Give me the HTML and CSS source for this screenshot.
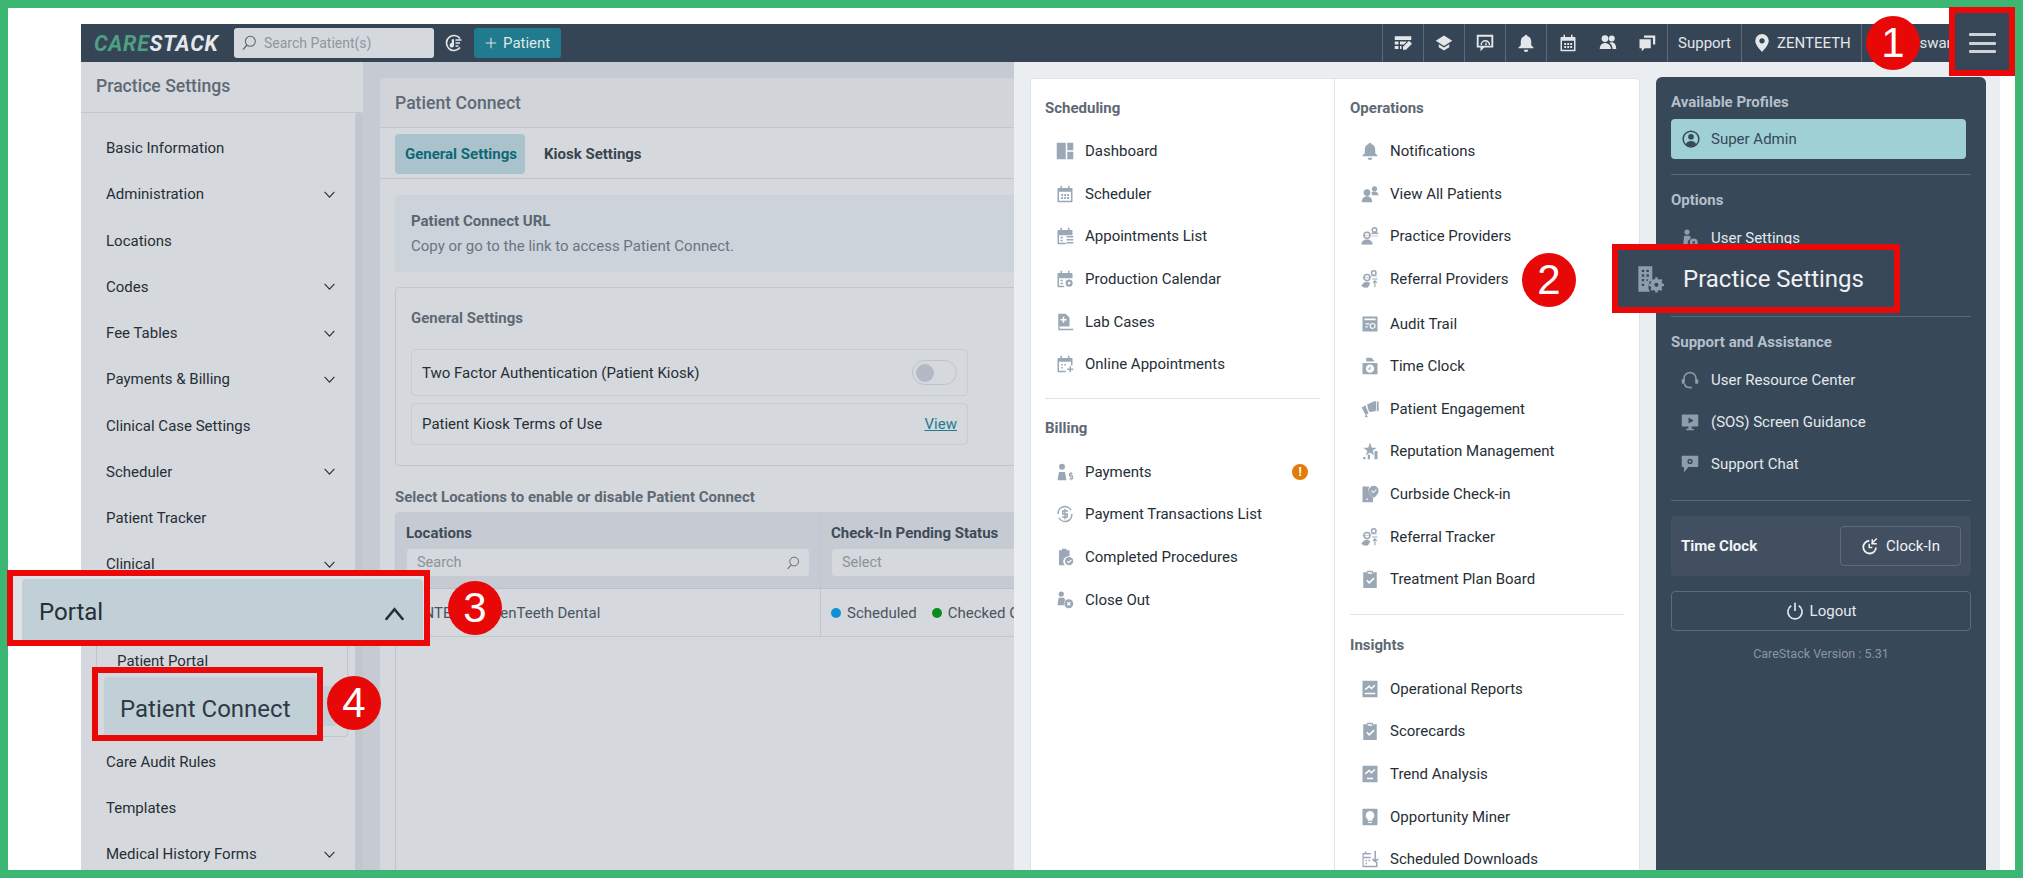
FILE: index.html
```html
<!DOCTYPE html>
<html lang="en">
<head>
<meta charset="utf-8">
<title>CareStack - Patient Connect</title>
<link rel="stylesheet" href="styles.css">
</head>
<body>
<svg class="sprite" width="0" height="0" aria-hidden="true">
  <symbol id="i-search" viewBox="0 0 24 24"><circle cx="14" cy="9.5" r="7.5" fill="none" stroke="currentColor" stroke-width="1.6"/><path d="M9 15 3 22" fill="none" stroke="currentColor" stroke-width="1.8"/></symbol>
  <symbol id="i-timer" viewBox="0 0 24 24"><path d="M20 6A10 10 0 1 0 20 18" fill="none" stroke="currentColor" stroke-width="2.2"/><path d="M9 7h3v8a3 3 0 1 1-3-3zM14 7h8v2h-8zM14 11h6v2h-6zM14 15h4v2h-4z" fill="currentColor"/></symbol>
  <symbol id="i-plus" viewBox="0 0 24 24"><path d="M12 3v18M3 12h18" stroke="currentColor" stroke-width="1.8" fill="none"/></symbol>
  <symbol id="i-down" viewBox="0 0 24 24"><path d="M3 7l9 10 9-10" fill="none" stroke="currentColor" stroke-width="2"/></symbol>
  <symbol id="i-up" viewBox="0 0 24 24"><path d="M2 18 12 6l10 12" fill="none" stroke="currentColor" stroke-width="3"/></symbol>
  <symbol id="i-tasks" viewBox="0 0 24 24"><path d="M1 3h22v5H1zM1 10h5v4H1zM8 10h9l-4 4H8zM1 16h5v4H1zM8 16h2v4H8z" fill="currentColor"/><path d="M12 21v-4l8-8 4 4-8 8z" fill="currentColor"/></symbol>
  <symbol id="i-cap" viewBox="0 0 24 24"><path d="M12 2 23 9 12 16 1 9z" fill="currentColor"/><path d="M5 13.5v4L12 22l7-4.500v-4L12 18z" fill="currentColor"/></symbol>
  <symbol id="i-gauge" viewBox="0 0 24 24"><path fill-rule="evenodd" d="M1 1h22v17H11l-5 5v-5H1zM3.500 3.500v12h17v-12z" fill="currentColor"/><path d="M7 14.500a5.500 5.500 0 1 1 11 0" fill="none" stroke="currentColor" stroke-width="2"/><path d="m12 15 1.500-6 1 6z" fill="currentColor"/></symbol>
  <symbol id="i-bell" viewBox="0 0 24 24"><path d="M12 1a2 2 0 0 1 2 2c4 1 5 4 5 8v4l3 3v1H2v-1l3-3v-4c0-4 1-7 5-8a2 2 0 0 1 2-2zM9 21h6a3 3 0 0 1-6 0z" fill="currentColor"/></symbol>
  <symbol id="i-cal" viewBox="0 0 24 24"><path fill-rule="evenodd" d="M6 1h2v3h8V1h2v3h3a1 1 0 0 1 1 1v17a1 1 0 0 1-1 1H3a1 1 0 0 1-1-1V5a1 1 0 0 1 1-1h3zM4 9v12h16V9z" fill="currentColor"/><path d="M7 12h2.500v2.500H7zM11 12h2.500v2.500H11zM15 12h2.500v2.500H15zM7 16h2.500v2.500H7zM11 16h2.500v2.500H11zM15 16h2.500v2.500H15z" fill="currentColor"/></symbol>
  <symbol id="i-applist" viewBox="0 0 24 24"><path fill-rule="evenodd" d="M6 1h2v3h8V1h2v3h3a1 1 0 0 1 1 1v6H4v10h9v2H3a1 1 0 0 1-1-1V5a1 1 0 0 1 1-1h3z" fill="currentColor"/><path d="M6 13h3v2H6zM6 17h3v2H6zM14 12h9v2h-9zM14 16h9v2h-9zM14 20h9v2h-9z" fill="currentColor"/></symbol>
  <symbol id="i-prodcal" viewBox="0 0 24 24"><path fill-rule="evenodd" d="M6 1h2v3h8V1h2v3h3a1 1 0 0 1 1 1v6H4v10h7v2H3a1 1 0 0 1-1-1V5a1 1 0 0 1 1-1h3z" fill="currentColor"/><path d="M6 13h3v2H6zM6 17h3v2H6z" fill="currentColor"/><circle cx="17.5" cy="17.5" r="3.2" fill="none" stroke="currentColor" stroke-width="3"/></symbol>
  <symbol id="i-online" viewBox="0 0 24 24"><path fill-rule="evenodd" d="M6 1h2v3h8V1h2v3h3a1 1 0 0 1 1 1v9h-2V9H4v12h9v2H3a1 1 0 0 1-1-1V5a1 1 0 0 1 1-1h3z" fill="currentColor"/><path d="M7 12h2v2H7zM11 12h2v2h-2zM7 16h2v2H7zM18 15h2v3h3v2h-3v3h-2v-3h-3v-2h3z" fill="currentColor"/></symbol>
  <symbol id="i-dash" viewBox="0 0 24 24"><path d="M1 1h12v22H1zM15 1h8v10h-8zM15 13h8v10h-8z" fill="currentColor"/></symbol>
  <symbol id="i-lab" viewBox="0 0 24 24"><path fill-rule="evenodd" d="M3 1h10l5 5v12H6a1 1 0 0 0 0 3h17v2H3zM9 5v3H6v2h3v3h2v-3h3V8h-3V5z" fill="currentColor"/></symbol>
  <symbol id="i-pay" viewBox="0 0 24 24"><circle cx="8" cy="5" r="4" fill="currentColor"/><path d="M2 23l2-11h8l2 11z" fill="currentColor"/><path d="M22 14h-4v3h4v4h-4M20 12v11" fill="none" stroke="currentColor" stroke-width="1.4"/></symbol>
  <symbol id="i-trans" viewBox="0 0 24 24"><path d="M3 12A9 9 0 0 1 20 7M21 12a9 9 0 0 1-17 5" fill="none" stroke="currentColor" stroke-width="2"/><path d="M16 8h-7v4h6v4H8M12 5v14" fill="none" stroke="currentColor" stroke-width="1.8"/></symbol>
  <symbol id="i-done" viewBox="0 0 24 24"><path d="M8 1h6v2h4v8a7 7 0 0 0-6 12H4V3h4z" fill="currentColor"/><circle cx="17.5" cy="17.5" r="5.5" fill="currentColor"/><path d="m15 17.5 2 2 3.500-3.500" fill="none" stroke="#fff" stroke-width="1.5"/></symbol>
  <symbol id="i-closeout" viewBox="0 0 24 24"><circle cx="7" cy="4" r="3.5" fill="currentColor"/><path d="M2 19l1.500-10h7l2 3a7 7 0 0 0-2 7z" fill="currentColor"/><circle cx="17" cy="17" r="6" fill="currentColor"/><path d="m15 15 4 4m0-4-4 4" stroke="#fff" stroke-width="1.5"/></symbol>
  <symbol id="i-patients" viewBox="0 0 24 24"><circle cx="8" cy="10" r="4.5" fill="currentColor"/><circle cx="18" cy="5" r="3.5" fill="currentColor"/><path d="M1 23c0-5 3-8 7-8s7 3 7 8zM14 10c1-1 2-1.500 4-1.500 3 0 5 2 5.500 5H15z" fill="currentColor"/></symbol>
  <symbol id="i-provider" viewBox="0 0 24 24"><circle cx="8" cy="11" r="4" fill="none" stroke="currentColor" stroke-width="2"/><circle cx="18" cy="4" r="3" fill="none" stroke="currentColor" stroke-width="2"/><path d="M1 23c0-4 3-6 7-6s7 2 7 6zM3 11h10M14 9h9c-.5-1.500-2-2.500-4.500-2.500S14.500 7.500 14 9zM14 12h9" fill="currentColor" stroke="currentColor" stroke-width=".8"/></symbol>
  <symbol id="i-referral" viewBox="0 0 24 24"><circle cx="8" cy="10" r="4" fill="none" stroke="currentColor" stroke-width="2"/><circle cx="17" cy="4" r="3" fill="none" stroke="currentColor" stroke-width="2"/><path d="M2 10h11M13 8h9M1 21c1-3 4-5 7-5 2 0 3 1 4 2l-3 5H4z" fill="currentColor" stroke="currentColor" stroke-width=".8"/><path d="M15 12h7M18.500 23v-8m-2.500 2 2.500-2.500L21 17" fill="none" stroke="currentColor" stroke-width="1.5"/></symbol>
  <symbol id="i-audit" viewBox="0 0 24 24"><path fill-rule="evenodd" d="M2 2h20v20H2zM4.500 7h15V4.500h-15zM6 11v1.500h5V11zM6 15v1.500h3V15zM15.500 10.500a4 4 0 1 0 0 8 4 4 0 0 0 0-8zm0 1.500a2.500 2.500 0 1 1 0 5 2.500 2.500 0 0 1 0-5z" fill="currentColor"/><path d="m17 17.500 3 3" stroke="currentColor" stroke-width="1.5"/></symbol>
  <symbol id="i-clock" viewBox="0 0 24 24"><path fill-rule="evenodd" d="M7 1h7l4 5H7zM2 8h20v15H2zM12 10a5.500 5.500 0 1 0 0 11 5.500 5.500 0 0 0 0-11z" fill="currentColor"/><path d="M12 12.500V16h-3" stroke="currentColor" stroke-width="1.5" fill="none"/></symbol>
  <symbol id="i-mega" viewBox="0 0 24 24"><path d="M1 10 6 7l4 11-4 2zM8 6l11-5 1 2v11l-1 1-7 1-1.500-1zM21 2h2.500v13H21zM5 21l3-1 1 3H6z" fill="currentColor"/></symbol>
  <symbol id="i-star" viewBox="0 0 24 24"><path d="m12 1 2.500 6.500H21l-5.500 4 2 6.500-5.500-4-5.500 4 2-6.500-5.500-4h6.500z" fill="currentColor"/><path d="M3 20h3v3H3zM9 17h3v6H9zM18 12h4v11h-4z" fill="currentColor"/></symbol>
  <symbol id="i-curb" viewBox="0 0 24 24"><path d="M2 2h9a8 8 0 0 0-1 4c0 4 3 8 6 11v6H2zM7 18v2h2v-2z" fill="currentColor" fill-rule="evenodd"/><path fill-rule="evenodd" d="M17 1a6.500 6.500 0 0 1 6.500 6.500c0 4-3.500 7-6.500 9.500-3-2.500-6.500-5.500-6.500-9.500A6.500 6.500 0 0 1 17 1z" fill="currentColor"/><path d="m14 7.500 2.500 2.500 4-4" fill="none" stroke="#fff" stroke-width="1.4"/></symbol>
  <symbol id="i-plan" viewBox="0 0 24 24"><path fill-rule="evenodd" d="M8 1h8v2h5v21H3V3h5zM9 3v2h6V3zM7 14.500l4 4 7-7-1.500-1.500-5.500 5.500-2.500-2.500z" fill="currentColor"/></symbol>
  <symbol id="i-report" viewBox="0 0 24 24"><path fill-rule="evenodd" d="M2 1h20v22H2zM5 12l1 1.500 5-4 3 3 5-5-1-1.500-4 4-3-3-6 5zM5 17v2h14v-2z" fill="currentColor"/></symbol>
  <symbol id="i-trend" viewBox="0 0 24 24"><path fill-rule="evenodd" d="M2 1h20v22H2zM5 11l1 1.500 5-4 3 3 5-5-1-1.500-4 4-3-3-6 5zM8 17v2h8v-2z" fill="currentColor"/></symbol>
  <symbol id="i-miner" viewBox="0 0 24 24"><path fill-rule="evenodd" d="M3 1h18a1 1 0 0 1 1 1v20a1 1 0 0 1-1 1H3a1 1 0 0 1-1-1V2a1 1 0 0 1 1-1zm9 3a6 6 0 0 0-3 11v2h6v-2a6 6 0 0 0-3-11zM9.500 18.500V20h5v-1.500z" fill="currentColor"/></symbol>
  <symbol id="i-sdown" viewBox="0 0 24 24"><path fill-rule="evenodd" d="M5 2h2v2h6v2H3.500v3H13v2H3.500v10H20v-5h2v7H2V4h3z" fill="currentColor"/><path d="M6 13h2v2H6zM10 13h2v2h-2zM6 17h2v2H6zM18 1h2v12l2-2 1.500 1.500L19 17l-4.500-4.500L16 11l2 2z" fill="currentColor"/></symbol>
  <symbol id="i-profile" viewBox="0 0 24 24"><circle cx="12" cy="12" r="10.5" fill="none" stroke="currentColor" stroke-width="2"/><circle cx="12" cy="9" r="3.8" fill="currentColor"/><path d="M5 19c1-3 4-4.500 7-4.500s6 1.500 7 4.500a10 10 0 0 1-14 0z" fill="currentColor"/></symbol>
  <symbol id="i-usets" viewBox="0 0 24 24"><circle cx="8" cy="4" r="3.5" fill="currentColor"/><path d="M3 23 4 9h8l1 4-4 3v7z" fill="currentColor"/><circle cx="17" cy="18" r="3.5" fill="none" stroke="currentColor" stroke-width="3.5"/></symbol>
  <symbol id="i-building" viewBox="0 0 24 24"><path fill-rule="evenodd" d="M2 1h12v11a8 8 0 0 0-2 11H2zM5 4v2h2V4zM9 4v2h2V4zM5 8v2h2V8zM9 8v2h2V8zM5 12v2h2v-2zM9 12v2h1v-2zM5 16v2h2v-2z" fill="currentColor"/><circle cx="17.5" cy="17" r="3.5" fill="none" stroke="currentColor" stroke-width="3.5"/><path d="M17.500 10.500v3M17.500 20.500v3M11 17h3M21 17h3M13 12.500l2 2M20 19.500l2 2M13 21.500l2-2M20 14.500l2-2" stroke="currentColor" stroke-width="2"/></symbol>
  <symbol id="i-headset" viewBox="0 0 24 24"><path d="M4 13V10a8 8 0 0 1 16 0v3" fill="none" stroke="currentColor" stroke-width="2"/><path d="M1 11h4v6H2a1 1 0 0 1-1-1zM19 11h3a1 1 0 0 1 1 1v4a1 1 0 0 1-1 1h-3z" fill="currentColor"/><path d="M5 17c0 3 3 5 7 5" fill="none" stroke="currentColor" stroke-width="2"/><circle cx="13" cy="22" r="1.5" fill="currentColor"/></symbol>
  <symbol id="i-screen" viewBox="0 0 24 24"><path fill-rule="evenodd" d="M2 2h20a1 1 0 0 1 1 1v14a1 1 0 0 1-1 1h-8v3h3v2H7v-2h3v-3H2a1 1 0 0 1-1-1V3a1 1 0 0 1 1-1zm8 4v8l7-4z" fill="currentColor"/></symbol>
  <symbol id="i-chatg" viewBox="0 0 24 24"><path fill-rule="evenodd" d="M2 1h20a1 1 0 0 1 1 1v13a1 1 0 0 1-1 1H10l-6 7v-7H2a1 1 0 0 1-1-1V2a1 1 0 0 1 1-1zm10 4a3.500 3.500 0 1 0 0 7 3.500 3.500 0 0 0 0-7zm0 2a1.500 1.500 0 1 1 0 3 1.500 1.500 0 0 1 0-3z" fill="currentColor"/></symbol>
  <symbol id="i-clockin" viewBox="0 0 24 24"><path d="M11 5a8.500 8.500 0 1 0 9 9" fill="none" stroke="currentColor" stroke-width="2.4"/><path d="M11 9v5h4M14 9l7-7M15 3v6h6" fill="none" stroke="currentColor" stroke-width="2"/></symbol>
  <symbol id="i-power" viewBox="0 0 24 24"><path d="M7 5a9.500 9.500 0 1 0 10 0M12 1v11" fill="none" stroke="currentColor" stroke-width="2.2"/></symbol>
  <symbol id="i-people" viewBox="0 0 24 24"><circle cx="8" cy="6" r="4.5" fill="currentColor"/><circle cx="17" cy="6" r="4" fill="currentColor"/><path d="M1 20c0-5 3-8 7-8s8 3 8 8zM14 11.500c1-.5 2-.5 3-.5 4 0 6 4 6 9h-5c0-3-1-6-4-8.500z" fill="currentColor"/></symbol>
  <symbol id="i-chats" viewBox="0 0 24 24"><path d="M8 2h15v12h-3V5H8z" fill="currentColor"/><path d="M2 7h15v12H9l-4 4v-4H2z" fill="currentColor"/></symbol>
  <symbol id="i-pin" viewBox="0 0 24 24"><path fill-rule="evenodd" d="M12 0a9 9 0 0 1 9 9c0 5.500-5.500 11-9 15-3.500-4-9-9.500-9-15a9 9 0 0 1 9-9zm0 5.500a3.500 3.500 0 1 0 0 7 3.500 3.500 0 0 0 0-7z" fill="currentColor"/></symbol>
</svg>

<div class="frame">
  <div class="app">
    <header class="topbar">
      <span class="logo"><span class="logo-care">CARE</span>STACK</span>
      <div class="topsearch">
        <svg class="ic-16"><use href="#i-search"/></svg>
        <span>Search Patient(s)</span>
      </div>
      <svg class="ic-18 timer"><use href="#i-timer"/></svg>
      <button class="addbtn" type="button"><svg class="ic-14"><use href="#i-plus"/></svg>Patient</button>
      <nav class="topright">
        <div class="tcell"><svg class="ic-18"><use href="#i-tasks"/></svg></div>
        <div class="tcell"><svg class="ic-18"><use href="#i-cap"/></svg></div>
        <div class="tcell"><svg class="ic-18"><use href="#i-gauge"/></svg></div>
        <div class="tcell"><svg class="ic-18"><use href="#i-bell"/></svg></div>
        <div class="tcell tcell-wide">
          <svg class="ic-18"><use href="#i-cal"/></svg>
          <svg class="ic-18"><use href="#i-people"/></svg>
          <svg class="ic-18"><use href="#i-chats"/></svg>
        </div>
        <div class="tcell tcell-text">Support</div>
        <div class="tcell tcell-loc"><svg class="ic-18"><use href="#i-pin"/></svg>ZENTEETH</div>
        <div class="tcell tcell-user">Aiswarya</div>
      </nav>
    </header>

    <div class="workspace">
      <aside class="sidebar">
        <div class="side-head">Practice Settings</div>
        <div class="side-body">
          <ul class="side-nav">
            <li class="side-item">Basic Information</li>
            <li class="side-item">Administration<svg class="ic-13"><use href="#i-down"/></svg></li>
            <li class="side-item">Locations</li>
            <li class="side-item">Codes<svg class="ic-13"><use href="#i-down"/></svg></li>
            <li class="side-item">Fee Tables<svg class="ic-13"><use href="#i-down"/></svg></li>
            <li class="side-item">Payments &amp; Billing<svg class="ic-13"><use href="#i-down"/></svg></li>
            <li class="side-item">Clinical Case Settings</li>
            <li class="side-item">Scheduler<svg class="ic-13"><use href="#i-down"/></svg></li>
            <li class="side-item">Patient Tracker</li>
            <li class="side-item">Clinical<svg class="ic-13"><use href="#i-down"/></svg></li>
            <li class="side-item">Portal<svg class="ic-13"><use href="#i-up"/></svg></li>
            <li class="side-sub">
              <div class="sub-row">Patient Portal</div>
              <div class="sub-row sub-row-active">Patient Connect</div>
            </li>
            <li class="side-item">Care Audit Rules</li>
            <li class="side-item">Templates</li>
            <li class="side-item">Medical History Forms<svg class="ic-13"><use href="#i-down"/></svg></li>
          </ul>
          <div class="side-scroll"></div>
        </div>
      </aside>

      <main class="main">
        <section class="card">
          <div class="card-head">Patient Connect</div>
          <div class="tabs">
            <span class="tab tab-active">General Settings</span>
            <span class="tab">Kiosk Settings</span>
          </div>
          <div class="card-body">
            <div class="urlbox">
              <div class="urlbox-title">Patient Connect URL</div>
              <div class="urlbox-desc">Copy or go to the link to access Patient Connect.</div>
            </div>
            <div class="genbox">
              <div class="genbox-title">General Settings</div>
              <div class="genrow genrow-a">Two Factor Authentication (Patient Kiosk)<span class="toggle"><span class="knob"></span></span></div>
              <div class="genrow genrow-b">Patient Kiosk Terms of Use<a class="link">View</a></div>
            </div>
            <div class="loc-title">Select Locations to enable or disable Patient Connect</div>
            <div class="table">
              <div class="thead">
                <div class="col col-a">
                  <div class="th">Locations</div>
                  <div class="tinput"><span>Search</span><svg class="ic-14"><use href="#i-search"/></svg></div>
                </div>
                <div class="col col-b">
                  <div class="th">Check-In Pending Status</div>
                  <div class="tinput"><span>Select</span></div>
                </div>
              </div>
              <div class="trow">
                <div class="col col-a">ZENTEETH - ZenTeeth Dental</div>
                <div class="col col-b"><i class="dot dot-blue"></i>Scheduled<i class="dot dot-green"></i>Checked Out</div>
              </div>
            </div>
          </div>
        </section>
      </main>

      <div class="menu">
        <div class="menu-card">
          <div class="mcol mcol-a">
            <div class="mtitle">Scheduling</div>
            <div class="mitem"><svg class="ic-18"><use href="#i-dash"/></svg>Dashboard</div>
            <div class="mitem"><svg class="ic-18"><use href="#i-cal"/></svg>Scheduler</div>
            <div class="mitem"><svg class="ic-18"><use href="#i-applist"/></svg>Appointments List</div>
            <div class="mitem"><svg class="ic-18"><use href="#i-prodcal"/></svg>Production Calendar</div>
            <div class="mitem"><svg class="ic-18"><use href="#i-lab"/></svg>Lab Cases</div>
            <div class="mitem"><svg class="ic-18"><use href="#i-online"/></svg>Online Appointments</div>
            <div class="mdiv"></div>
            <div class="mtitle">Billing</div>
            <div class="mitem"><svg class="ic-18"><use href="#i-pay"/></svg>Payments<span class="alert">!</span></div>
            <div class="mitem"><svg class="ic-18"><use href="#i-trans"/></svg>Payment Transactions List</div>
            <div class="mitem"><svg class="ic-18"><use href="#i-done"/></svg>Completed Procedures</div>
            <div class="mitem"><svg class="ic-18"><use href="#i-closeout"/></svg>Close Out</div>
          </div>
          <div class="mcol mcol-b">
            <div class="mtitle">Operations</div>
            <div class="mitem"><svg class="ic-18"><use href="#i-bell"/></svg>Notifications</div>
            <div class="mitem"><svg class="ic-18"><use href="#i-patients"/></svg>View All Patients</div>
            <div class="mitem"><svg class="ic-18"><use href="#i-provider"/></svg>Practice Providers</div>
            <div class="mitem"><svg class="ic-18"><use href="#i-referral"/></svg>Referral Providers</div>
            <div class="mitem mitem-gap"><svg class="ic-18"><use href="#i-audit"/></svg>Audit Trail</div>
            <div class="mitem"><svg class="ic-18"><use href="#i-clock"/></svg>Time Clock</div>
            <div class="mitem"><svg class="ic-18"><use href="#i-mega"/></svg>Patient Engagement</div>
            <div class="mitem"><svg class="ic-18"><use href="#i-star"/></svg>Reputation Management</div>
            <div class="mitem"><svg class="ic-18"><use href="#i-curb"/></svg>Curbside Check-in</div>
            <div class="mitem"><svg class="ic-18"><use href="#i-referral"/></svg>Referral Tracker</div>
            <div class="mitem"><svg class="ic-18"><use href="#i-plan"/></svg>Treatment Plan Board</div>
            <div class="mdiv"></div>
            <div class="mtitle">Insights</div>
            <div class="mitem"><svg class="ic-18"><use href="#i-report"/></svg>Operational Reports</div>
            <div class="mitem"><svg class="ic-18"><use href="#i-plan"/></svg>Scorecards</div>
            <div class="mitem"><svg class="ic-18"><use href="#i-trend"/></svg>Trend Analysis</div>
            <div class="mitem"><svg class="ic-18"><use href="#i-miner"/></svg>Opportunity Miner</div>
            <div class="mitem"><svg class="ic-18"><use href="#i-sdown"/></svg>Scheduled Downloads</div>
          </div>
        </div>

        <div class="panel">
          <div class="ptitle ptitle-first">Available Profiles</div>
          <div class="profile"><svg class="ic-18"><use href="#i-profile"/></svg>Super Admin</div>
          <div class="pdiv"></div>
          <div class="ptitle">Options</div>
          <div class="pitems">
            <div class="pitem"><svg class="ic-18"><use href="#i-usets"/></svg>User Settings</div>
            <div class="pitem"><svg class="ic-18"><use href="#i-building"/></svg>Practice Settings</div>
          </div>
          <div class="pdiv"></div>
          <div class="ptitle">Support and Assistance</div>
          <div class="pitems">
            <div class="pitem"><svg class="ic-18"><use href="#i-headset"/></svg>User Resource Center</div>
            <div class="pitem"><svg class="ic-18"><use href="#i-screen"/></svg>(SOS) Screen Guidance</div>
            <div class="pitem"><svg class="ic-18"><use href="#i-chatg"/></svg>Support Chat</div>
          </div>
          <div class="pdiv"></div>
          <div class="clockbox">
            <strong>Time Clock</strong>
            <button class="clockbtn" type="button"><svg class="ic-18"><use href="#i-clockin"/></svg>Clock-In</button>
          </div>
          <button class="logout" type="button"><svg class="ic-18"><use href="#i-power"/></svg>Logout</button>
          <div class="version">CareStack Version : 5.31</div>
        </div>
      </div>
    </div>
  </div>
</div>

<div class="note note-burger"><span class="burger"><i></i><i></i><i></i></span></div>
<div class="note note-practice"><svg class="ic-28"><use href="#i-building"/></svg>Practice Settings</div>
<div class="note note-portal"><div class="note-inner">Portal<svg class="ic-21"><use href="#i-up"/></svg></div></div>
<div class="note note-connect"><div class="note-inner">Patient Connect</div></div>
<div class="badge badge-1">1</div>
<div class="badge badge-2">2</div>
<div class="badge badge-3">3</div>
<div class="badge badge-4">4</div>
</body>
</html>
```

FILE: styles.css
```css
* { box-sizing: border-box; }
html, body { margin: 0; padding: 0; }
body {
  position: relative;
  width: 2023px;
  height: 878px;
  overflow: hidden;
  font-family: Roboto, "Liberation Sans", sans-serif;
  font-size: 15px;
  color: #262e36;
  background: #fff;
}
.sprite { position: absolute; }
ul { list-style: none; margin: 0; padding: 0; }
button { font: inherit; color: inherit; background: none; }
svg { display: block; flex: none; }
.ic-13 { width: 13px; height: 13px; }
.ic-14 { width: 14px; height: 14px; }
.ic-16 { width: 16px; height: 16px; }
.ic-18 { width: 18px; height: 18px; }
.ic-21 { width: 21px; height: 21px; }
.ic-28 { width: 28px; height: 28px; }

.frame {
  height: 878px;
  border: 8px solid #3bb673;
  padding: 16px 15px 0 73px;
  overflow: hidden;
}
.app { height: 846px; display: flex; flex-direction: column; }

/* top bar */
.topbar {
  height: 38px;
  flex: none;
  background: #354556;
  display: flex;
  align-items: center;
  padding-left: 13px;
  color: #e3e7ea;
}
.logo {
  width: 140px;
  flex: none;
  font-size: 21.5px;
  font-weight: 700;
  font-style: italic;
  letter-spacing: .7px;
  color: #e4e8ea;
}
.logo-care { color: #4f9f83; }
.topsearch {
  width: 200px;
  height: 30px;
  flex: none;
  background: #d5d9dd;
  border-radius: 3px;
  display: flex;
  align-items: center;
  gap: 7px;
  padding-left: 7px;
  font-size: 14px;
  color: #8e969e;
}
.topsearch svg { color: #59636d; }
.timer { margin-left: 11px; }
.addbtn {
  margin-left: 11px;
  width: 87px;
  height: 30px;
  flex: none;
  border: 0;
  border-radius: 3px;
  background: #1f7b8d;
  color: #dfe8ea;
  display: flex;
  align-items: center;
  gap: 5px;
  padding: 0 0 0 10px;
}
.topright { margin-left: auto; display: flex; height: 38px; }
.tcell {
  width: 41px;
  border-left: 1px solid #5b6a78;
  display: flex;
  align-items: center;
  justify-content: center;
}
.tcell-wide { width: 121px; justify-content: space-between; padding: 0 11px 0 12px; }
.tcell-text { width: 74px; }
.tcell-loc { width: 120px; gap: 6px; justify-content: flex-start; padding-left: 11px; }
.tcell-user { width: 139px; justify-content: flex-start; padding-left: 44px; }

/* layout */
.workspace { flex: 1; min-height: 0; display: flex; }
.sidebar { width: 282px; flex: none; background: #d5d9dd; display: flex; flex-direction: column; }
.side-head {
  height: 51px;
  flex: none;
  border-bottom: 1px solid #bfc6d0;
  padding: 14px 0 0 15px;
  font-size: 17.6px;
  font-weight: 500;
  line-height: 20px;
  color: #5e6975;
}
.side-body { flex: 1; min-height: 0; display: flex; }
.side-nav { flex: 1; padding-top: 12px; overflow: hidden; }
.side-scroll { width: 8px; flex: none; background: #c2c7ce; border-radius: 4px 4px 0 0; }
.side-item {
  height: 46.25px;
  display: flex;
  align-items: center;
  justify-content: space-between;
  padding: 0 19px 0 25px;
}
.side-sub {
  height: 103px;
  margin: 0 7px 2px 15px;
  padding: 7px 10px 0 0;
  border: 1px solid #bfc6d0;
  border-top: 0;
  border-radius: 0 0 4px 4px;
}
.sub-row { height: 40px; display: flex; align-items: center; padding-left: 20px; margin-bottom: 5px; }
.sub-row-active { background: #c1d0d7; border-radius: 4px; margin-left: 5px; padding-left: 15px; }

.main { flex: none; width: 651px; overflow: hidden; background: #c5cad3; padding: 16px 0 0 17px; }
.card {
  width: 1000px;
  height: 792px;
  background: #d5d9dd;
  border-radius: 4px 0 0 0;
  display: flex;
  flex-direction: column;
}
.card-head {
  height: 50px;
  flex: none;
  background: #d1d4d9;
  border-bottom: 1px solid #bfc6d0;
  border-radius: 4px 0 0 0;
  padding: 15px 0 0 15px;
  font-size: 17.6px;
  font-weight: 500;
  line-height: 20px;
  color: #5e6975;
}
.tabs {
  height: 51px;
  flex: none;
  border-bottom: 1px solid #bfc6d0;
  padding: 6px 0 0 15px;
  display: flex;
  gap: 9px;
}
.tab {
  height: 40px;
  padding: 0 10px;
  border-radius: 4px;
  display: flex;
  align-items: center;
  font-weight: 700;
  white-space: nowrap;
  color: #39444f;
}
.tab-active { width: 130px; padding: 0 0 0 10px; background: #a9c2cb; color: #0e6877; }
.card-body { flex: 1; min-height: 0; padding: 16px 0 0 15px; display: flex; flex-direction: column; }
.urlbox {
  height: 77px;
  flex: none;
  background: #ccd3db;
  border-radius: 4px;
  padding: 16px 0 0 16px;
}
.urlbox-title { font-weight: 700; color: #5a6571; line-height: 20px; }
.urlbox-desc { margin-top: 5px; color: #6a7580; line-height: 20px; }
.genbox {
  height: 179px;
  flex: none;
  margin-top: 15px;
  border: 1px solid #bfc6d0;
  border-radius: 4px;
  padding: 20px 0 0 15px;
}
.genbox-title { font-weight: 700; color: #5e6975; line-height: 20px; }
.genrow {
  width: 557px;
  border: 1px solid #c5ccd4;
  border-radius: 4px;
  display: flex;
  align-items: center;
  justify-content: space-between;
  padding: 0 10px;
}
.genrow-a { height: 47px; margin-top: 21px; }
.genrow-b { height: 42px; margin-top: 7px; }
.toggle {
  width: 45px;
  height: 25px;
  border: 1px solid #bcc3cc;
  border-radius: 13px;
  padding: 3px 0 0 3px;
}
.knob { display: block; width: 18px; height: 18px; border-radius: 50%; background: #b4bac5; }
.link { color: #1f7b8d; text-decoration: underline; }
.loc-title { margin-top: 21px; height: 20px; line-height: 20px; font-weight: 700; color: #5e6975; flex: none; }
.table {
  flex: 1;
  margin-top: 5px;
  border-left: 1px solid #bfc6d0;
  border-radius: 4px 0 0 0;
}
.thead { height: 77px; display: flex; background: #c5cad3; border-bottom: 1px solid #b9c0ca; border-radius: 4px 0 0 0; }
.trow { height: 48px; display: flex; border-bottom: 1px solid #bfc6d0; align-items: stretch; }
.col { padding: 0 10px; }
.col-a { width: 424px; flex: none; }
.col-b { flex: 1; border-left: 1px solid #bfc6d0; }
.th { height: 36px; padding-top: 11px; line-height: 20px; font-weight: 700; color: #404b57; }
.tinput {
  height: 29px;
  background: #d5d9dd;
  border: 1px solid #c5ccd4;
  border-radius: 4px;
  display: flex;
  align-items: center;
  justify-content: space-between;
  padding: 0 9px 0 10px;
  color: #8b939c;
  font-size: 14.5px;
}
.tinput svg { color: #59636d; }
.col-b .tinput { width: 300px; }
.trow .col { display: flex; align-items: center; color: #4a545f; }
.dot { display: block; width: 10px; height: 10px; border-radius: 50%; margin-right: 6px; }
.dot-blue { background: #0f8fd6; }
.dot-green { background: #0a8c1e; margin-left: 15px; }

/* dropdown */
.menu { width: 986px; flex: none; background: #ebeef1; display: flex; gap: 16px; padding: 16px 14px 0 16px; }
.menu-card {
  width: 610px;
  flex: none;
  background: #fff;
  border: 1px solid #dfe3e8;
  border-bottom: 0;
  border-radius: 4px 4px 0 0;
  display: flex;
}
.mcol { padding-top: 7px; }
.mcol-a { width: 304px; flex: none; border-right: 1px solid #dfe3e8; padding-left: 14px; padding-right: 14px; }
.mcol-b { flex: 1; padding-left: 15px; padding-right: 15px; }
.mtitle { height: 43px; margin-bottom: 1px; display: flex; align-items: center; font-weight: 700; color: #5e6975; }
.mitem { height: 42.6px; display: flex; align-items: center; gap: 11px; padding: 0 12px 0 11px; }
.mitem-gap { margin-top: 2px; }
.mitem svg { color: #9aa8b5; }
.mcol-a .mdiv { margin: 12px 0 8px; }
.mdiv { height: 1px; background: #dfe3e8; margin: 13px 0 9px; }
.alert {
  margin-left: auto;
  width: 16px;
  height: 16px;
  border-radius: 50%;
  background: #e07b0c;
  color: #fff;
  font-size: 12px;
  font-weight: 700;
  display: flex;
  align-items: center;
  justify-content: center;
}

/* dark panel */
.panel {
  width: 330px;
  flex: none;
  margin-top: -1px;
  padding: 0 15px;
  background: #374859;
  border-radius: 6px 6px 0 0;
  color: #e4e8ec;
}
.ptitle { height: 20px; line-height: 20px; font-weight: 700; color: #b4bfca; }
.ptitle-first { margin-top: 15px; }
.profile {
  width: 295px;
  height: 40px;
  margin-top: 7px;
  background: #9ed0d6;
  border-radius: 4px;
  display: flex;
  align-items: center;
  gap: 11px;
  padding-left: 11px;
  color: #374859;
}
.pdiv { height: 1px; background: #5a6876; margin: 15px 0 15px; }
.pitems { margin-top: 7px; }
.pitem { height: 42px; display: flex; align-items: center; gap: 12px; padding-left: 10px; }
.pitem svg { color: #8f9dab; }
.clockbox {
  height: 60px;
  background: #414f61;
  border-radius: 4px;
  display: flex;
  align-items: center;
  justify-content: space-between;
  padding: 0 10px;
  color: #f2f4f6;
}
.clockbtn {
  width: 121px;
  height: 40px;
  border: 1px solid #5d6b7a;
  border-radius: 4px;
  display: flex;
  align-items: center;
  justify-content: center;
  gap: 7px;
  padding: 0;
}
.logout {
  width: 300px;
  height: 40px;
  margin-top: 15px;
  border: 1px solid #5d6b7a;
  border-radius: 4px;
  display: flex;
  align-items: center;
  justify-content: center;
  gap: 6px;
  padding: 0;
}
.version { margin-top: 13px; text-align: center; font-size: 12.5px; line-height: 20px; color: #8a97a3; }

/* annotations laid over the screenshot */
.note { position: absolute; border: 6px solid #ea0808; }
.note-burger {
  left: 1949px; top: 7px; width: 66px; height: 69px;
  background: #364656;
  display: flex; align-items: center; justify-content: center;
}
.burger { display: flex; flex-direction: column; gap: 5.5px; width: 27px; margin-top: 3px; }
.burger i { display: block; height: 3px; background: #cdd2d7; border-radius: 1px; }
.note-practice {
  left: 1612px; top: 244px; width: 288px; height: 69px;
  background: #384859;
  color: #eef1f3;
  display: flex; align-items: center; gap: 19px;
  padding: 0 0 0 18px;
  font-size: 24px;
}
.note-practice svg { color: #8f9dab; }
.note-portal {
  left: 7px; top: 570px; width: 423px; height: 76px;
  background: #dfe2e5;
  padding: 3px 1px 0 9px;
  font-size: 24px;
}
.note-portal .note-inner { padding: 5px 18px 0 17px; }
.note-portal svg { margin-top: 4px; }
.note-connect {
  left: 92px; top: 667px; width: 231px; height: 74px;
  background: #d5d9dd;
  padding: 4px 0 0 6px;
  font-size: 24px;
  color: #2f3a45;
}
.note-inner {
  height: 100%;
  background: #c1d0d7;
  border-radius: 4px 4px 0 0;
  display: flex;
  align-items: center;
  justify-content: space-between;
}
.note-connect .note-inner { padding: 5px 16px 0; }
.badge {
  position: absolute;
  width: 54px; height: 54px;
  border-radius: 50%;
  background: #e80808;
  color: #fff;
  font-family: "Liberation Sans", Arial, sans-serif;
  font-size: 42px;
  display: flex; align-items: center; justify-content: center;
}
.badge-1 { left: 1866px; top: 16px; }
.badge-2 { left: 1522px; top: 253px; }
.badge-3 { left: 448px; top: 581px; }
.badge-4 { left: 327px; top: 676px; }
```
